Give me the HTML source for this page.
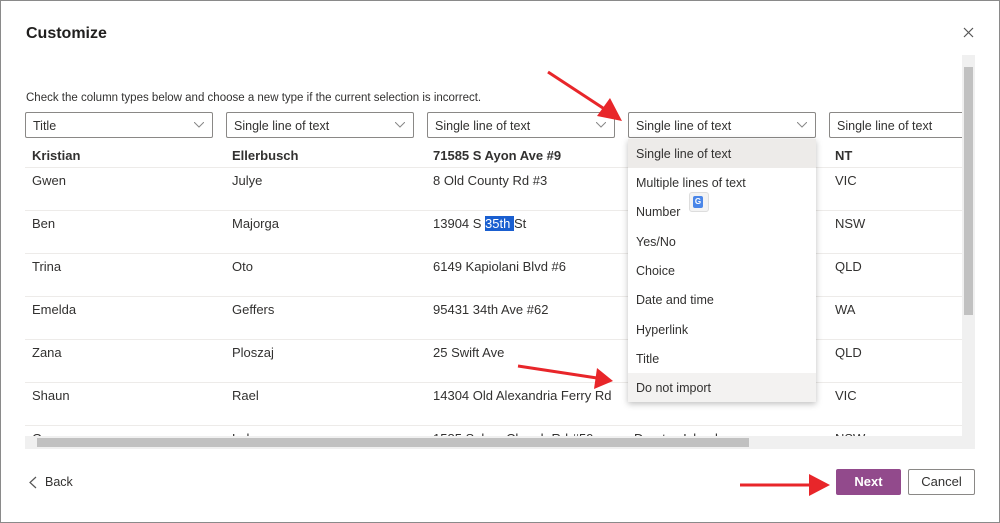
<!DOCTYPE html>
<html><head><style>
*{box-sizing:border-box;margin:0;padding:0}
body{width:1000px;height:523px;background:#fff;font-family:"Liberation Sans",sans-serif;color:#323130;position:relative;overflow:hidden}
.a{position:absolute;white-space:nowrap}
.dd{position:absolute;top:112px;height:26px;border:1px solid #8a8886;border-radius:2px;font-size:12.5px;padding:6px 7px;color:#323130;background:#fff}
.dd svg{position:absolute;right:8px;top:9px}
.t{font-size:13px}
.line{position:absolute;left:25px;width:937px;height:1px;background:#edebe9}
.mi{position:absolute;left:0;width:188px;height:29px;font-size:12.5px;padding:8px 8px}
</style></head><body>
<div class="a" style="left:26px;top:25px;font-size:16px;font-weight:600;color:#201f1e">Customize</div>
<svg class="a" style="left:963px;top:27px" width="11" height="11"><path d="M1 1L10 10M10 1L1 10" stroke="#555" stroke-width="1.2"/></svg>
<div class="a" style="left:26px;top:92px;font-size:11.5px;color:#323130">Check the column types below and choose a new type if the current selection is incorrect.</div>

<div style="position:absolute;left:25px;top:112px;width:937px;height:324px;overflow:hidden">
<div style="position:relative;left:-25px;top:-112px">
<div class="dd" style="left:25px;width:188px">Title<svg width="10" height="6"><path d="M0 0L5 5L10 0" stroke="#888" fill="none"/></svg></div>
<div class="dd" style="left:226px;width:188px">Single line of text<svg width="10" height="6"><path d="M0 0L5 5L10 0" stroke="#888" fill="none"/></svg></div>
<div class="dd" style="left:427px;width:188px">Single line of text<svg width="10" height="6"><path d="M0 0L5 5L10 0" stroke="#888" fill="none"/></svg></div>
<div class="dd" style="left:628px;width:188px">Single line of text<svg width="10" height="6"><path d="M0 0L5 5L10 0" stroke="#888" fill="none"/></svg></div>
<div class="dd" style="left:829px;width:188px">Single line of text</div>
<div class="line" style="top:167px"></div><div class="line" style="top:210px"></div><div class="line" style="top:253px"></div><div class="line" style="top:296px"></div><div class="line" style="top:339px"></div><div class="line" style="top:382px"></div><div class="line" style="top:425px"></div>
<div class="a t" style="left:32px;top:148px;font-weight:bold">Kristian</div><div class="a t" style="left:232px;top:148px;font-weight:bold">Ellerbusch</div><div class="a t" style="left:433px;top:148px;font-weight:bold">71585 S Ayon Ave #9</div><div class="a t" style="left:835px;top:148px;font-weight:bold">NT</div>
<div class="a t" style="left:32px;top:173px">Gwen</div><div class="a t" style="left:232px;top:173px">Julye</div><div class="a t" style="left:433px;top:173px">8 Old County Rd #3</div><div class="a t" style="left:835px;top:173px">VIC</div>
<div class="a t" style="left:32px;top:216px">Ben</div><div class="a t" style="left:232px;top:216px">Majorga</div><div class="a t" style="left:433px;top:216px">13904 S <span style="background:#1a5fd0;color:#fff">35th </span>St</div><div class="a t" style="left:835px;top:216px">NSW</div>
<div class="a t" style="left:32px;top:259px">Trina</div><div class="a t" style="left:232px;top:259px">Oto</div><div class="a t" style="left:433px;top:259px">6149 Kapiolani Blvd #6</div><div class="a t" style="left:835px;top:259px">QLD</div>
<div class="a t" style="left:32px;top:302px">Emelda</div><div class="a t" style="left:232px;top:302px">Geffers</div><div class="a t" style="left:433px;top:302px">95431 34th Ave #62</div><div class="a t" style="left:835px;top:302px">WA</div>
<div class="a t" style="left:32px;top:345px">Zana</div><div class="a t" style="left:232px;top:345px">Ploszaj</div><div class="a t" style="left:433px;top:345px">25 Swift Ave</div><div class="a t" style="left:835px;top:345px">QLD</div>
<div class="a t" style="left:32px;top:388px">Shaun</div><div class="a t" style="left:232px;top:388px">Rael</div><div class="a t" style="left:433px;top:388px">14304 Old Alexandria Ferry Rd</div><div class="a t" style="left:634px;top:388px">Mooroolbark</div><div class="a t" style="left:835px;top:388px">VIC</div>
<div class="a t" style="left:32px;top:431px">Gerry</div><div class="a t" style="left:232px;top:431px">Lake</div><div class="a t" style="left:433px;top:431px">1585 Salem Church Rd #59</div><div class="a t" style="left:634px;top:431px">Dorotyo Island</div><div class="a t" style="left:835px;top:431px">NSW</div>
</div></div>

<div class="a" style="left:628px;top:139px;width:188px;height:263px;background:#fff;box-shadow:0 2px 6px rgba(0,0,0,.25)">
<div class="mi" style="top:0;background:#edebe9">Single line of text</div>
<div class="mi" style="top:29px">Multiple lines of text</div>
<div class="mi" style="top:58px">Number</div>
<div class="mi" style="top:88px">Yes/No</div>
<div class="mi" style="top:117px">Choice</div>
<div class="mi" style="top:146px">Date and time</div>
<div class="mi" style="top:176px">Hyperlink</div>
<div class="mi" style="top:205px">Title</div>
<div class="mi" style="top:234px;background:#f3f2f1">Do not import</div>
</div>
<div class="a" style="left:689px;top:192px;width:20px;height:20px;border:1px solid #ddd;border-radius:3px;background:#f3f3f3"><div style="position:absolute;left:3px;top:3px;width:10px;height:12px;background:#4a86e8;border-radius:2px;color:#fff;font-size:8px;font-weight:bold;text-align:center;line-height:12px">G</div></div>

<div class="a" style="left:962px;top:55px;width:13px;height:381px;background:#f0f0f0"><div style="position:absolute;left:2px;top:12px;width:9px;height:248px;background:#c1c1c1"></div></div>
<div class="a" style="left:25px;top:436px;width:950px;height:13px;background:#f0f0f0"><div style="position:absolute;left:12px;top:2px;width:712px;height:9px;background:#c1c1c1"></div></div>

<svg class="a" style="left:29px;top:476px" width="8" height="13"><path d="M7 1L1 6.5L7 12" stroke="#555" fill="none" stroke-width="1.2"/></svg>
<div class="a" style="left:45px;top:475px;font-size:12.5px">Back</div>
<div class="a" style="left:836px;top:469px;width:65px;height:26px;background:#924a8c;border-radius:2px;color:#fff;font-size:13px;font-weight:600;text-align:center;line-height:26px">Next</div>
<div class="a" style="left:908px;top:469px;width:67px;height:26px;border:1px solid #8a8886;border-radius:2px;font-size:13px;text-align:center;line-height:24px">Cancel</div>

<svg class="a" style="left:0;top:0" width="1000" height="523">
<g stroke="#e8262a" stroke-width="3" fill="#e8262a">
<line x1="548" y1="72" x2="606" y2="110"/><polygon points="622,121 597,116 610,98" stroke="none"/>
<line x1="518" y1="366" x2="597" y2="378"/><polygon points="613,381 594,389 597,368" stroke="none"/>
<line x1="740" y1="485" x2="810" y2="485"/><polygon points="830,485 809,474 809,496" stroke="none"/>
</g></svg>
<div class="a" style="left:0;top:0;width:1000px;height:523px;border:1px solid #8a8a8a;pointer-events:none"></div>
</body></html>
